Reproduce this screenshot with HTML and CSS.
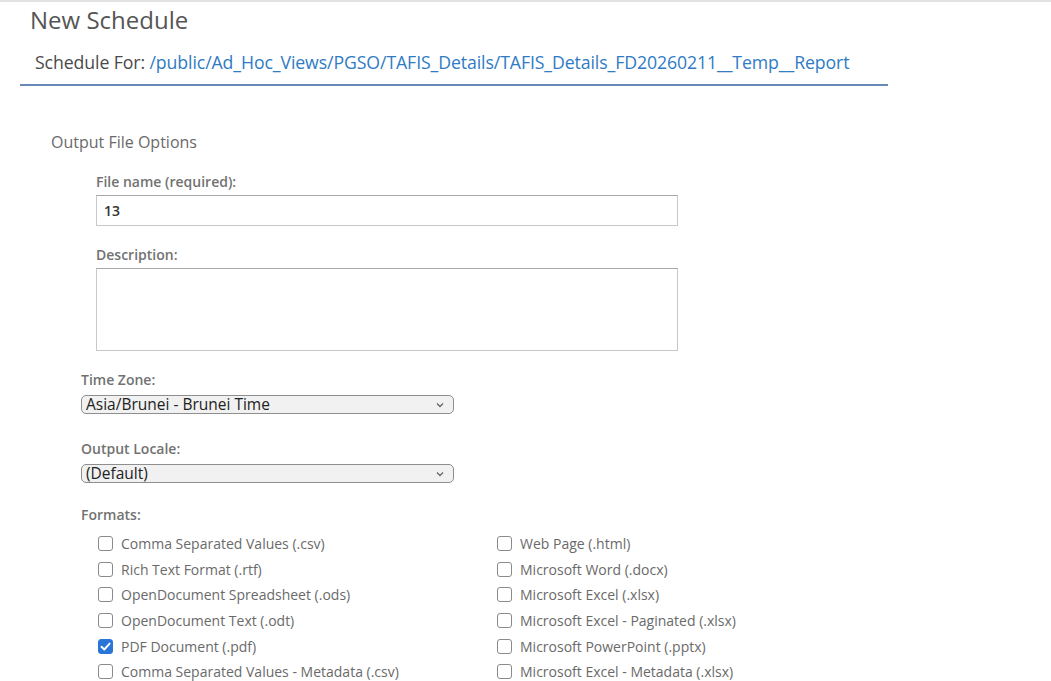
FILE: index.html
```html
<!DOCTYPE html>
<html>
<head>
<meta charset="utf-8">
<link rel="stylesheet" href="styles.css">
</head>
<body>
<div class="page">
  <div class="header">
    <h1 class="title">New Schedule</h1>
    <div class="schedule-for">Schedule For: <a class="path" href="#">/public/Ad_Hoc_Views/PGSO/TAFIS_Details/TAFIS_Details_FD20260211__Temp__Report</a></div>
  </div>
  <div class="section">
    <div class="section-title">Output File Options</div>
    <div class="field wide">
      <label class="label">File name (required):</label>
      <div class="input">13</div>
    </div>
    <div class="field wide">
      <label class="label">Description:</label>
      <div class="textarea"></div>
    </div>
    <div class="field narrow tz-field">
      <label class="label">Time Zone:</label>
      <div class="select"><span>Asia/Brunei - Brunei Time</span><svg class="chev" width="8" height="6" viewBox="0 0 8 6"><path d="M1 1.5 L4 4.5 L7 1.5" fill="none" stroke="#666" stroke-width="1.3"/></svg></div>
    </div>
    <div class="field narrow">
      <label class="label">Output Locale:</label>
      <div class="select"><span>(Default)</span><svg class="chev" width="8" height="6" viewBox="0 0 8 6"><path d="M1 1.5 L4 4.5 L7 1.5" fill="none" stroke="#666" stroke-width="1.3"/></svg></div>
    </div>
    <div class="field narrow formats-field">
      <label class="label">Formats:</label>
      <div class="formats">
        <div class="opt"><span class="cb"></span>Comma Separated Values (.csv)</div>
        <div class="opt"><span class="cb"></span>Web Page (.html)</div>
        <div class="opt"><span class="cb"></span>Rich Text Format (.rtf)</div>
        <div class="opt"><span class="cb"></span>Microsoft Word (.docx)</div>
        <div class="opt"><span class="cb"></span>OpenDocument Spreadsheet (.ods)</div>
        <div class="opt"><span class="cb"></span>Microsoft Excel (.xlsx)</div>
        <div class="opt"><span class="cb"></span>OpenDocument Text (.odt)</div>
        <div class="opt"><span class="cb"></span>Microsoft Excel - Paginated (.xlsx)</div>
        <div class="opt"><span class="cb checked"><svg width="15" height="15" viewBox="0 0 15 15"><path d="M3.5 7.8 L6.3 10.5 L11.6 4.6" fill="none" stroke="#fff" stroke-width="1.9" stroke-linecap="round" stroke-linejoin="round"/></svg></span>PDF Document (.pdf)</div>
        <div class="opt"><span class="cb"></span>Microsoft PowerPoint (.pptx)</div>
        <div class="opt"><span class="cb"></span>Comma Separated Values - Metadata (.csv)</div>
        <div class="opt"><span class="cb"></span>Microsoft Excel - Metadata (.xlsx)</div>
      </div>
    </div>
  </div>
</div>
</body>
</html>
```

FILE: styles.css
```css
html, body {
  margin: 0;
  padding: 0;
  background: #fff;
  font-family: "Open Sans", "Noto Sans", sans-serif;
  color: #555;
}
.page {
  border-top: 2px solid #e2e2e2;
  height: 679px;
  overflow: hidden;
}
.header {
  margin-left: 20px;
  width: 868px;
  border-bottom: 2px solid #6787b6;
  padding-bottom: 10px;
}
.title {
  margin: 0;
  padding: 3px 0 0 10px;
  font-size: 24px;
  font-weight: 400;
  color: #555;
  line-height: 30px;
}
.schedule-for {
  padding: 15px 0 0 15px;
  font-size: 17.7px;
  line-height: 24px;
  color: #4a4a4a;
  letter-spacing: -0.1px;
  white-space: nowrap;
}
.path {
  color: #2f7bc4;
  text-decoration: none;
}
.section {
  padding: 45px 0 0 51px;
}
.section-title {
  font-size: 16px;
  line-height: 22px;
  color: #6a6a6a;
  margin-bottom: 20px;
}
.field {
  margin-bottom: 20px;
}
.field.wide {
  margin-left: 45px;
}
.field.narrow {
  margin-left: 30px;
}
.tz-field {
  margin-bottom: 26px;
}
.label {
  display: block;
  font-size: 14px;
  font-weight: 600;
  color: #727272;
  line-height: 18px;
  margin-bottom: 4px;
}
.narrow .label {
  margin-bottom: 6px;
}
.input {
  width: 582px;
  height: 31px;
  border: 1px solid #c8c8c8;
  border-top-color: #a8a8a8;
  box-sizing: border-box;
  padding: 0 7px;
  font-size: 14px;
  font-weight: 600;
  line-height: 29px;
  color: #333;
}
.textarea {
  width: 582px;
  height: 83px;
  border: 1px solid #c8c8c8;
  border-top-color: #a8a8a8;
  box-sizing: border-box;
}
.select {
  width: 373px;
  height: 19px;
  box-sizing: border-box;
  border: 1px solid #8e8e8e;
  border-radius: 5px;
  background: #f1f1f1;
  display: flex;
  align-items: center;
  justify-content: space-between;
  padding: 0 9px 0 4px;
  font-size: 15.5px;
  line-height: 17px;
  color: #222;
}
.chev {
  display: block;
}
.formats-field {
  margin-top: 23px;
}
.formats {
  display: grid;
  grid-template-columns: 399px 300px;
  grid-auto-rows: 25.6px;
  padding-left: 17px;
  margin-top: 7px;
}
.opt {
  display: flex;
  align-items: center;
  font-size: 14px;
  color: #6a6a6a;
  white-space: nowrap;
}
.cb {
  width: 15px;
  height: 15px;
  box-sizing: border-box;
  border: 1px solid #8a8a8a;
  border-radius: 3px;
  margin-right: 8px;
  flex: none;
  background: #fff;
}
.cb.checked {
  background: #2a76d8;
  border-color: #2a76d8;
}
.cb.checked svg {
  display: block;
  margin: -1px;
}
```
